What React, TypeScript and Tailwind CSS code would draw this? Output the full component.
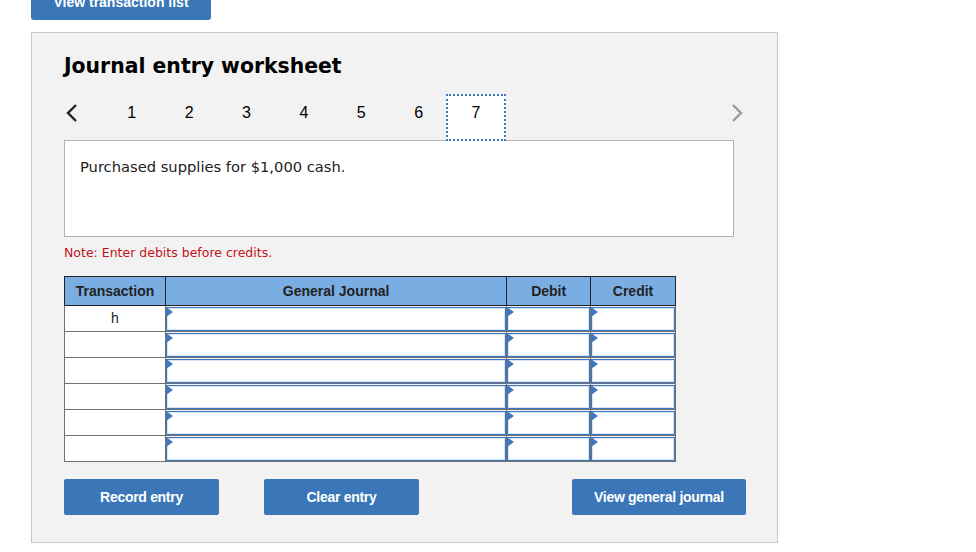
import React from "react";

const pages = ["1", "2", "3", "4", "5", "6"];

function InputCell({ w }: { w: string }) {
  return (
    <td className={`${w} p-0 border border-[#707070]`}>
      <div className="relative h-[24px] border border-[#3f78bd] shadow-[inset_0_0_0_1px_#d6e4f4] bg-white">
        <span className="absolute -left-[1px] -top-[1px] w-0 h-0 border-y-[5px] border-y-transparent border-l-[7px] border-l-[#3f78bd]" />
      </div>
    </td>
  );
}

export default function App() {
  const rows = ["h", "", "", "", "", ""];

  return (
    <div className="relative w-[976px] h-[552px] bg-white overflow-hidden font-['Liberation_Sans',Arial,sans-serif]">
      {/* top button, scrolled off the top */}
      <div className="absolute left-[31px] -top-[16px] w-[180px] h-[36px] bg-[#3b76b9] rounded-[3px] flex items-center justify-center text-white font-bold text-[14px]">
        View transaction list
      </div>

      <div className="absolute left-[31px] top-[32px] w-[747px] h-[511px] bg-[#f2f2f2] border border-[#c8c8c8] pl-[32px] pr-[43px]">
        <h1 className="mt-[20px] font-['DejaVu_Sans',Verdana,sans-serif] font-bold text-[20.4px] leading-[26px] text-black">
          Journal entry worksheet
        </h1>

        {/* step nav */}
        <div className="relative mt-[15px] h-[47px] flex items-start">
          <svg className="absolute left-[2px] top-[10px]" width="12" height="18" viewBox="0 0 12 18">
            <path d="M10 1 L2 9 L10 17" fill="none" stroke="#222" strokeWidth="2.4" />
          </svg>
          <div className="flex pl-[39px] pt-[7px] text-[16px] text-black">
            {pages.map((p) => (
              <span key={p} className="w-[57.4px] text-center">{p}</span>
            ))}
          </div>
          <div className="absolute left-[382px] top-0 w-[60px] h-[47px] bg-white border-[2px] border-dotted border-[#3f78bd] flex justify-center pt-[5px] text-[16px] text-black">
            7
          </div>
          <svg className="absolute left-[667px] top-[10px]" width="12" height="18" viewBox="0 0 12 18">
            <path d="M2 1 L10 9 L2 17" fill="none" stroke="#9a9a9a" strokeWidth="2.4" />
          </svg>
        </div>

        {/* description */}
        <div className="-mt-[1px] h-[97px] bg-white border border-[#b4b4b4] px-[15px] pt-[15px] font-['DejaVu_Sans',Verdana,sans-serif] text-[14.7px] text-[#222]">
          Purchased supplies for $1,000 cash.
        </div>

        <p className="mt-[8px] font-['DejaVu_Sans',Verdana,sans-serif] text-[12.5px] text-[#c0141b] leading-[16px]">
          Note: Enter debits before credits.
        </p>

        <table className="mt-[15px] border-collapse w-[612px] border border-[#707070]">
          <thead>
            <tr className="h-[29px] bg-[#7aaee3] text-[14px] font-bold text-[#222]">
              <th className="w-[101px] border border-[#222] font-bold">Transaction</th>
              <th className="w-[342px] border border-[#222] font-bold">General Journal</th>
              <th className="w-[84px] border border-[#222] font-bold">Debit</th>
              <th className="w-[85px] border border-[#222] font-bold">Credit</th>
            </tr>
          </thead>
          <tbody>
            {rows.map((r, i) => (
              <tr key={i} className="h-[26px]">
                <td className="w-[101px] p-0 border border-[#707070] bg-white text-center text-[14px] text-[#222]">{r}</td>
                <InputCell w="w-[342px]" />
                <InputCell w="w-[84px]" />
                <InputCell w="w-[85px]" />
              </tr>
            ))}
          </tbody>
        </table>

        <div className="relative mt-[17px] h-[36px]">
          {[
            { label: "Record entry", cls: "left-0 w-[155px]" },
            { label: "Clear entry", cls: "left-[200px] w-[155px]" },
            { label: "View general journal", cls: "left-[508px] w-[174px]" },
          ].map((b) => (
            <button
              key={b.label}
              className={`absolute top-0 ${b.cls} h-[36px] bg-[#3b76b9] rounded-[2px] text-white font-bold text-[14px] tracking-[-0.3px]`}
            >
              {b.label}
            </button>
          ))}
        </div>
      </div>
    </div>
  );
}
